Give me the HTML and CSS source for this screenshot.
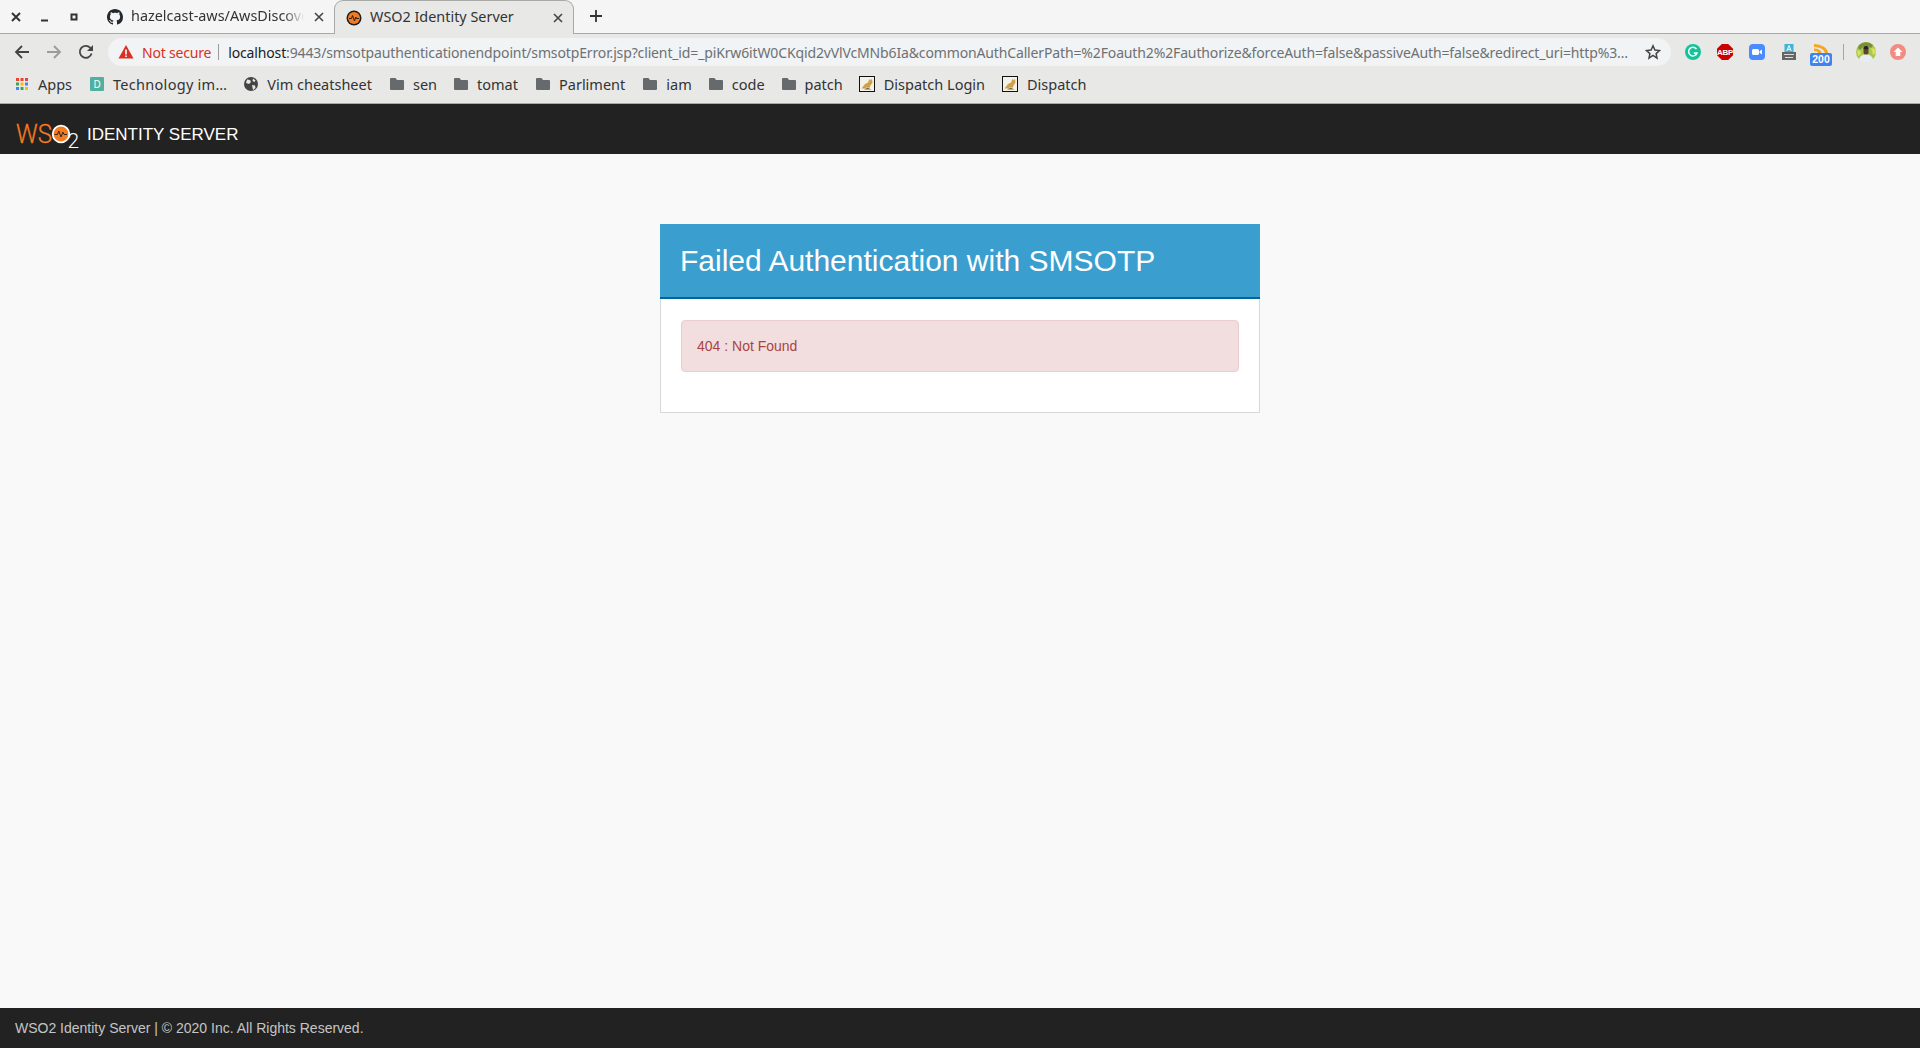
FILE: index.html
```html
<!DOCTYPE html>
<html lang="en">
<head>
<meta charset="utf-8">
<title>WSO2 Identity Server</title>
<link rel="stylesheet" href="styles.css">
</head>
<body>
<div class="browser">
  <div class="tabstrip">
    <div class="winctl">
      <svg class="wc" viewBox="0 0 12 12"><path d="M2 2l8 8M10 2l-8 8" stroke="#333" stroke-width="2"/></svg>
      <svg class="wc" viewBox="0 0 12 12"><path d="M2 9.500h7" stroke="#333" stroke-width="2"/></svg>
      <svg class="wc" viewBox="0 0 12 12"><path d="M3.500 3.500h5v5h-5z" fill="none" stroke="#333" stroke-width="2"/></svg>
    </div>
    <div class="tab">
      <svg class="favicon" viewBox="0 0 16 16"><path fill="#24292e" d="M8 0C3.58 0 0 3.58 0 8c0 3.54 2.29 6.53 5.47 7.59.4.07.55-.17.55-.38 0-.19-.01-.82-.01-1.49-2.01.37-2.53-.49-2.69-.94-.09-.23-.48-.94-.82-1.13-.28-.15-.68-.52-.01-.53.63-.01 1.08.58 1.23.82.72 1.21 1.87.87 2.33.66.07-.52.28-.87.51-1.07-1.78-.2-3.64-.89-3.64-3.95 0-.87.31-1.59.82-2.15-.08-.2-.36-1.02.08-2.12 0 0 .67-.21 2.2.82.64-.18 1.32-.27 2-.27s1.36.09 2 .27c1.53-1.04 2.2-.82 2.2-.82.44 1.1.16 1.92.08 2.12.51.56.82 1.27.82 2.15 0 3.07-1.87 3.75-3.65 3.95.29.25.54.73.54 1.48 0 1.07-.01 1.93-.01 2.2 0 .21.15.46.55.38A8.01 8.01 0 0016 8c0-4.42-3.58-8-8-8z"/></svg>
      <span class="tab-title fade">hazelcast-aws/AwsDiscovery</span>
      <svg class="tab-close" viewBox="0 0 10 10"><path d="M1 1l8 8M9 1l-8 8" stroke="#444" stroke-width="1.600"/></svg>
    </div>
    <div class="tab active">
      <svg class="favicon" viewBox="0 0 16 16"><circle cx="8" cy="8" r="7.500" fill="#1d1d1d"/><circle cx="8" cy="8" r="6" fill="#f47b20"/><path d="M3 8.500h2.500l1-3 2 5.500 1.300-4 .7 1.500H13" fill="none" stroke="#222" stroke-width="1"/></svg>
      <span class="tab-title">WSO2 Identity Server</span>
      <svg class="tab-close" viewBox="0 0 10 10"><path d="M1 1l8 8M9 1l-8 8" stroke="#444" stroke-width="1.600"/></svg>
    </div>
    <svg class="newtab" viewBox="0 0 14 14"><path d="M7 1v12M1 7h12" stroke="#333" stroke-width="1.800"/></svg>
  </div>

  <div class="toolbar">
    <svg class="nav" viewBox="0 0 16 16"><path d="M15 8H2.500M8 2L2 8l6 6" fill="none" stroke="#444" stroke-width="1.800"/></svg>
    <svg class="nav" viewBox="0 0 16 16"><path d="M1 8h12.500M8 2l6 6-6 6" fill="none" stroke="#9b9b9b" stroke-width="1.800"/></svg>
    <svg class="nav" viewBox="0 0 16 16"><path d="M13.600 9.500A6 6 0 1 1 12.300 3.800L14.500 6" fill="none" stroke="#444" stroke-width="1.800"/><path d="M15 1v6H9z" fill="#444"/></svg>
    <div class="omnibox">
      <svg class="warn" viewBox="0 0 16 16"><path d="M8 1l7.500 13.500H.5z" fill="#d93025"/><path d="M7.200 5.500h1.600v5H7.200zM7.200 11.400h1.600V13H7.200z" fill="#fff"/></svg>
      <span class="notsecure">Not secure</span>
      <span class="omni-sep"></span>
      <span class="url"><span class="host">localhost</span>:9443/smsotpauthenticationendpoint/smsotpError.jsp?client_id=_piKrw6itW0CKqid2vVlVcMNb6Ia&amp;commonAuthCallerPath=%2Foauth2%2Fauthorize&amp;forceAuth=false&amp;passiveAuth=false&amp;redirect_uri=http%3…</span>
      <svg class="star" viewBox="0 0 16 16"><path d="M8 1.800l1.900 4.200 4.600.5-3.400 3.100.9 4.500L8 11.400l-4 2.700.9-4.500L1.500 6.500 6.100 6z" fill="none" stroke="#444" stroke-width="1.500"/></svg>
    </div>
    <div class="exts">
      <svg class="ext" viewBox="0 0 16 16"><circle cx="8" cy="8" r="8" fill="#15c39a"/><path d="M11.500 5.200A4.300 4.300 0 1 0 12 9H8.800" fill="none" stroke="#fff" stroke-width="1.500"/></svg>
      <span class="ext abp">ABP</span>
      <svg class="ext" viewBox="0 0 16 16"><rect width="16" height="16" rx="4" fill="#4a8cff"/><rect x="3" y="5" width="7" height="6" rx="1.500" fill="#fff"/><path d="M10.500 7.300L13 5.500v5l-2.500-1.800z" fill="#fff"/></svg>
      <svg class="ext" viewBox="0 0 16 16"><path d="M3.500 0h9v9h-9z" fill="#3fb4d8"/><path d="M8 1.500L5.800 7M8 1.500L10.200 7M6.500 5.300h3" stroke="#fff" stroke-width="1" fill="none"/><path d="M1 8h14v8H1z" fill="#666"/><path d="M3 10h10v1H3zM4 13h8v1H4z" fill="#ddd"/></svg>
      <span class="rss">
        <svg class="rss-arc" viewBox="0 0 14 9"><path d="M0 0a14 9 0 0 1 14 9h-3.200A10.800 6 0 0 0 0 3zM0 4.500a7 4.500 0 0 1 7.500 4.500H4A4 2 0 0 0 0 7z" fill="#f5a623"/></svg>
        <span class="rss-badge">200</span>
      </span>
    </div>
    <span class="tool-sep"></span>
    <svg class="avatar" viewBox="0 0 20 20">
      <circle cx="10" cy="10" r="10" fill="#a8c84c"/>
      <path d="M3 3a10 10 0 0 1 14 0l-2 3-4-2-4 1-3 3-2-2z" fill="#7a8f3a"/>
      <path d="M15 6l4 1 1 4-3 2zM1 9l3-1 1 4-3 2z" fill="#dade62"/>
      <path d="M7.500 7a2.500 3 0 0 1 5 0v3a2.500 3 0 0 1-5 0z" fill="#5b4436"/>
      <path d="M7.500 6.500a2.500 2.500 0 0 1 5 0l-1 .8h-3z" fill="#2a2320"/>
      <path d="M3 17.500c1-4 4-5 7-5s6 1 7 5a10 10 0 0 1-14 0z" fill="#e8ebf2"/>
    </svg>
    <svg class="update" viewBox="0 0 16 16"><circle cx="8" cy="8" r="8" fill="#f28b82"/><path d="M8 3.500L12.500 8H10.300v4H5.700V8H3.500z" fill="#fff"/></svg>
  </div>

  <div class="bookmarks">
    <div class="bm bm-apps"><svg class="bm-ico" viewBox="0 0 14 14"><path fill="#ea4335" d="M1 1h3v3H1z"/><path fill="#ea4335" d="M5.500 1h3v3h-3z"/><path fill="#ea4335" d="M10 1h3v3h-3z"/><path fill="#34a853" d="M1 5.500h3v3H1z"/><path fill="#fbbc05" d="M5.500 5.500h3v3h-3z"/><path fill="#4285f4" d="M10 5.500h3v3h-3z"/><path fill="#4285f4" d="M1 10h3v3H1z"/><path fill="#34a853" d="M5.500 10h3v3h-3z"/><path fill="#fbbc05" d="M10 10h3v3h-3z"/></svg><span>Apps</span></div>
    <div class="bm bm-tech"><span class="bm-ico doc">D</span><span class="tech-label">Technology im…</span></div>
    <div class="bm bm-vim"><svg class="bm-ico" viewBox="0 0 14 14"><circle cx="7" cy="7" r="7" fill="#444"/><path d="M3 2.500l3 .5 1 2-2 2-3-1zM8 8l3 .500.500 2.500L9 13zM9 1.500l2.500 2-1 1.500-2-1z" fill="#e8e8e6"/></svg><span>Vim cheatsheet</span></div>
    <div class="bm bm-sen"><svg class="bm-ico" viewBox="0 0 14 12"><use href="#folder"/></svg><span>sen</span></div>
    <div class="bm bm-tomat"><svg class="bm-ico" viewBox="0 0 14 12"><use href="#folder"/></svg><span>tomat</span></div>
    <div class="bm bm-parl"><svg class="bm-ico" viewBox="0 0 14 12"><use href="#folder"/></svg><span>Parliment</span></div>
    <div class="bm bm-iam"><svg class="bm-ico" viewBox="0 0 14 12"><use href="#folder"/></svg><span>iam</span></div>
    <div class="bm bm-code"><svg class="bm-ico" viewBox="0 0 14 12"><use href="#folder"/></svg><span>code</span></div>
    <div class="bm bm-patch"><svg class="bm-ico" viewBox="0 0 14 12"><use href="#folder"/></svg><span>patch</span></div>
    <div class="bm bm-dl"><svg class="bm-ico cat" viewBox="0 0 16 16"><use href="#cat"/></svg><span>Dispatch Login</span></div>
    <div class="bm bm-d"><svg class="bm-ico cat" viewBox="0 0 16 16"><use href="#cat"/></svg><span>Dispatch</span></div>
    <svg class="defs" aria-hidden="true">
      <symbol id="folder" viewBox="0 0 14 12"><path d="M1 0h4.500l1.500 2h6a1 1 0 0 1 1 1v8a1 1 0 0 1-1 1H1a1 1 0 0 1-1-1V1a1 1 0 0 1 1-1z" fill="#666a6c"/></symbol>
      <symbol id="cat" viewBox="0 0 16 16"><rect x=".5" y=".5" width="15" height="15" fill="#f4f1e8" stroke="#111"/><path d="M2.500 12.500L6 8l3-1.500L10.500 3l1 1 1.500-1 .5 3.500-2 3-1 2.500-2-1-2.500 1.500z" fill="#d2a04a"/><path d="M5 13.500l3.500-2 4 2z" fill="#7a6a4a"/></symbol>
    </svg>
  </div>
</div>

<header class="site-header">
  <svg class="logo" viewBox="0 0 64 30">
    <text class="logo-ws" x="0" y="23.500" textLength="36" lengthAdjust="spacingAndGlyphs">WS</text>
    <circle cx="45" cy="15" r="8.300" fill="#f47b20" stroke="#fff" stroke-width="1.800"/>
    <path d="M38.500 15.500h3l1.300-3.500 2.200 6 1.800-5 1.200 2.500h3" fill="none" stroke="#2a2a2a" stroke-width="1"/>
    <text class="logo-two" x="51.500" y="28.500">2</text>
  </svg>
  <span class="brand">IDENTITY SERVER</span>
</header>

<main class="content">
  <section class="panel">
    <h1 class="panel-title">Failed Authentication with SMSOTP</h1>
    <div class="panel-body">
      <div class="alert">404 : Not Found</div>
    </div>
  </section>
</main>

<footer class="site-footer">WSO2 Identity Server | © 2020 Inc. All Rights Reserved.</footer>
</body>
</html>
```
FILE: styles.css
```css
* { box-sizing: border-box; }
html, body { margin: 0; height: 100%; }
body {
  width: 1920px;
  height: 1048px;
  display: flex;
  flex-direction: column;
  overflow: hidden;
  background: #f9f9f9;
  font-family: "Liberation Sans", Arial, sans-serif;
  color: #333;
}

/* Browser chrome */
.browser { flex: none; font-family: "Noto Sans", sans-serif; font-size: 14px; }
.tabstrip {
  height: 34px;
  display: flex;
  align-items: flex-end;
  background: #f5f5f5;
  border-bottom: 1px solid #a9a9a5;
}
.winctl {
  display: flex;
  align-items: center;
  gap: 17px;
  height: 33px;
  padding-left: 10px;
  width: 94px;
}
.wc { width: 12px; height: 12px; }
.tab {
  width: 240px;
  height: 33px;
  display: flex;
  align-items: center;
  padding: 0 10px 0 13px;
}
.tab.active {
  height: 34px;
  margin-bottom: -1px;
  background: #e8e8e6;
  border: 1px solid #a9a9a5;
  border-bottom: 0;
  border-radius: 9px 9px 0 0;
  padding: 0 10px 0 11px;
}
.favicon { width: 16px; height: 16px; flex: none; }
.tab-title {
  flex: 1;
  min-width: 0;
  margin: 0 0 2px 8px;
  overflow: hidden;
  white-space: nowrap;
  color: #333;
  font-size: 14.400px;
}
.fade { -webkit-mask-image: linear-gradient(90deg, #000 88%, transparent 100%); mask-image: linear-gradient(90deg, #000 88%, transparent 100%); margin-right: 10px; }
.tab-close { width: 10px; height: 10px; flex: none; }
.newtab { width: 14px; height: 14px; margin: 0 0 10px 15px; }

.toolbar {
  box-sizing: content-box;
  height: 28px;
  padding: 4px 0 0 14px;
  background: #e8e8e6;
  display: flex;
  align-items: center;
}
.nav { width: 16px; height: 16px; margin-right: 16px; flex: none; }
.omnibox {
  width: 1563px;
  height: 28px;
  margin-left: -2px;
  flex: none;
  display: flex;
  align-items: center;
  background: #f1f3f4;
  border-radius: 14px;
  padding: 0 10px;
}
.warn { width: 16px; height: 16px; flex: none; }
.notsecure { color: #d93025; margin-left: 8px; letter-spacing: -0.200px; white-space: nowrap; }
.omni-sep { width: 1px; height: 16px; background: #9a9a9a; margin: 0 9px 0 7px; flex: none; }
.url {
  flex: 1;
  min-width: 0;
  white-space: nowrap;
  color: #6d7175;
  letter-spacing: -0.140px;
}
.host { color: #202124; }
.star { width: 16px; height: 16px; margin-left: 13px; flex: none; }
.exts { display: flex; align-items: center; gap: 16px; margin-left: 14px; }
.ext { width: 16px; height: 16px; flex: none; }
.abp {
  display: flex;
  align-items: center;
  justify-content: center;
  clip-path: polygon(30% 0, 70% 0, 100% 30%, 100% 70%, 70% 100%, 30% 100%, 0 70%, 0 30%);
  background: #c00;
  color: #fff;
  font: bold 8px "Liberation Sans", sans-serif;
  letter-spacing: -0.300px;
}
.rss { width: 22px; height: 28px; margin-left: -3px; display: flex; flex-direction: column; align-items: center; }
.rss-arc { width: 14px; height: 9px; margin-top: 6px; flex: none; }
.rss-badge {
  display: block;
  width: 22px;
  height: 13px;
  border-radius: 2px;
  background: #3f83f0;
  color: #fff;
  font: bold 10.500px/13px "Liberation Sans", sans-serif;
  text-align: center;
}
.tool-sep { width: 1px; height: 16px; background: #a5a5a3; margin: 0 12px 0 11px; flex: none; }
.avatar { width: 20px; height: 20px; flex: none; }
.update { width: 16px; height: 16px; margin-left: 14px; flex: none; }

.bookmarks {
  height: 38px;
  background: #e8e8e6;
  border-bottom: 1px solid #a9a9a5;
  display: flex;
  align-items: center;
  padding: 0 0 1px 15px;
}
.bm { display: flex; align-items: center; gap: 9px; white-space: nowrap; color: #333; font-size: 14.500px; flex: none; }
.bm-ico { width: 14px; height: 14px; flex: none; }
.cat { width: 16px; height: 16px; }
.tech-label { letter-spacing: 0.280px; }
.doc {
  display: flex;
  align-items: center;
  justify-content: center;
  background: #4fb0a0;
  color: #fff;
  font-size: 10px;
  border-radius: 1px;
}
.defs { width: 0; height: 0; position: absolute; }
.bm-tech { margin-left: 18px; }
.bm-vim { margin-left: 17px; }
.bm-sen { margin-left: 18px; }
.bm-tomat { margin-left: 17px; }
.bm-parl { margin-left: 18px; }
.bm-iam { margin-left: 18px; }
.bm-code { margin-left: 17px; }
.bm-patch { margin-left: 17px; }
.bm-dl { margin-left: 16px; }
.bm-d { margin-left: 17px; }

/* Page */
.site-header {
  flex: none;
  height: 50px;
  background: #222;
  display: flex;
  align-items: center;
  padding: 9px 0 0 16px;
}
.logo { width: 64px; height: 30px; flex: none; overflow: visible; }
.logo-ws { font: 300 26px Roboto, sans-serif; fill: #f47b20; stroke: #f47b20; stroke-width: .3; }
.logo-two { font: 300 21px Roboto, sans-serif; fill: #fff; }
.brand { margin: 2px 0 0 7px; color: #fff; font-size: 17px; }

.content { flex: 1; display: flex; justify-content: center; align-items: flex-start; padding-top: 70px; }
.panel { width: 600px; }
.panel-title {
  margin: 0;
  height: 75px;
  padding: 0 20px;
  display: flex;
  align-items: center;
  background: #3a9ecf;
  border-bottom: 2px solid #006699;
  color: #fff;
  font-size: 30px;
  font-weight: 400;
}
.panel-body {
  height: 114px;
  background: #fff;
  border: 1px solid #d8d8d8;
  border-top: 0;
  padding: 21px 20px 0;
}
.alert {
  height: 52px;
  padding: 15px;
  background: #f2dede;
  border: 1px solid #ebccd1;
  border-radius: 4px;
  color: #a94442;
  font-size: 14px;
  line-height: 20px;
}

.site-footer {
  flex: none;
  height: 40px;
  background: #222;
  color: #c5c5c5;
  font-size: 14px;
  line-height: 40px;
  padding-left: 15px;
}
```
